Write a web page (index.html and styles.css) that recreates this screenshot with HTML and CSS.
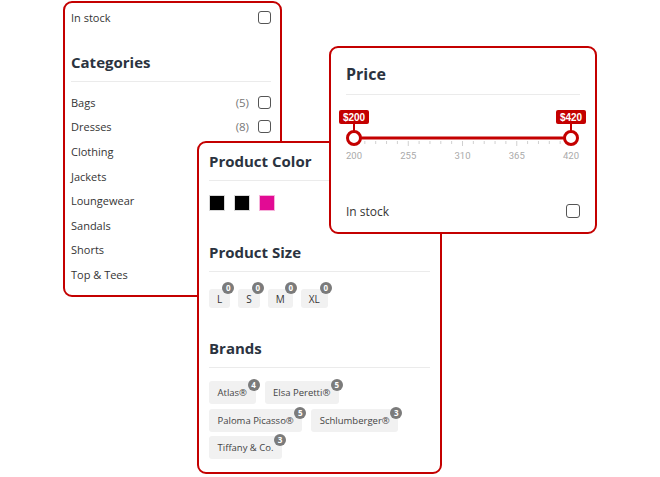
FILE: index.html
```html
<!DOCTYPE html>
<html>
<head>
<meta charset="utf-8">
<link rel="stylesheet" href="styles.css">
</head>
<body>
<div class="canvas">
  <section class="card card-cat">
    <div class="row stock-row"><span>In stock</span><span class="box"></span></div>
    <h2 class="title">Categories</h2>
    <div class="rule"></div>
    <ul class="cats">
      <li><span class="name">Bags</span><span class="count">(5)</span><span class="box"></span></li>
      <li><span class="name">Dresses</span><span class="count">(8)</span><span class="box"></span></li>
      <li><span class="name">Clothing</span></li>
      <li><span class="name">Jackets</span></li>
      <li><span class="name">Loungewear</span></li>
      <li><span class="name">Sandals</span></li>
      <li><span class="name">Shorts</span></li>
      <li><span class="name">Top &amp; Tees</span></li>
    </ul>
  </section>

  <section class="card card-prod">
    <h2 class="title">Product Color</h2>
    <div class="rule"></div>
    <div class="swatches">
      <span class="sw black"></span><span class="sw black"></span><span class="sw pink"></span>
    </div>
    <h2 class="title t-size">Product Size</h2>
    <div class="rule"></div>
    <div class="sizes">
      <span class="size">L<b class="badge">0</b></span>
      <span class="size">S<b class="badge">0</b></span>
      <span class="size">M<b class="badge">0</b></span>
      <span class="size">XL<b class="badge">0</b></span>
    </div>
    <h2 class="title t-brands">Brands</h2>
    <div class="rule"></div>
    <div class="brands">
      <span class="brand">Atlas®<b class="badge">4</b></span>
      <span class="brand">Elsa Peretti®<b class="badge">5</b></span>
      <span class="brand">Paloma Picasso®<b class="badge">5</b></span>
      <span class="brand">Schlumberger®<b class="badge">3</b></span>
      <span class="brand">Tiffany &amp; Co.<b class="badge">3</b></span>
    </div>
  </section>

  <section class="card card-price">
    <h2 class="title">Price</h2>
    <div class="rule"></div>
    <svg class="slider" width="254" height="66" viewBox="0 0 254 66">
      <g stroke="#d0d0d0" stroke-width="1">
        <line x1="28.85" y1="41" x2="28.85" y2="44"/><line x1="39.7" y1="41" x2="39.7" y2="44"/><line x1="50.55" y1="41" x2="50.55" y2="44"/><line x1="61.4" y1="41" x2="61.4" y2="44"/>
        <line x1="72.25" y1="41" x2="72.25" y2="46"/>
        <line x1="83.1" y1="41" x2="83.1" y2="44"/><line x1="93.95" y1="41" x2="93.95" y2="44"/><line x1="104.8" y1="41" x2="104.8" y2="44"/><line x1="115.65" y1="41" x2="115.65" y2="44"/>
        <line x1="126.5" y1="41" x2="126.5" y2="46"/>
        <line x1="137.35" y1="41" x2="137.35" y2="44"/><line x1="148.2" y1="41" x2="148.2" y2="44"/><line x1="159.05" y1="41" x2="159.05" y2="44"/><line x1="169.9" y1="41" x2="169.9" y2="44"/>
        <line x1="180.75" y1="41" x2="180.75" y2="46"/>
        <line x1="191.6" y1="41" x2="191.6" y2="44"/><line x1="202.45" y1="41" x2="202.45" y2="44"/><line x1="213.3" y1="41" x2="213.3" y2="44"/><line x1="224.15" y1="41" x2="224.15" y2="44"/>
      </g>
      <line x1="18" y1="38" x2="235" y2="38" stroke="#c40000" stroke-width="3"/>
      <rect x="3" y="10" width="30" height="14" rx="2" fill="#c40000"/>
      <line x1="18" y1="24" x2="18" y2="31" stroke="#c40000" stroke-width="2"/>
      <text x="18" y="21" class="tip">$200</text>
      <rect x="220" y="10" width="30" height="14" rx="2" fill="#c40000"/>
      <line x1="235" y1="24" x2="235" y2="31" stroke="#c40000" stroke-width="2"/>
      <text x="235" y="21" class="tip">$420</text>
      <circle cx="18" cy="38" r="6.5" fill="#fff" stroke="#c40000" stroke-width="3"/>
      <circle cx="235" cy="38" r="6.5" fill="#fff" stroke="#c40000" stroke-width="3"/>
      <text x="18" y="58.5" class="lbl">200</text>
      <text x="72.25" y="58.5" class="lbl">255</text>
      <text x="126.5" y="58.5" class="lbl">310</text>
      <text x="180.75" y="58.5" class="lbl">365</text>
      <text x="235" y="58.5" class="lbl">420</text>
    </svg>
    <div class="row price-stock"><span>In stock</span><span class="box big"></span></div>
  </section>
</div>
</body>
</html>
```
FILE: styles.css
```css
* { box-sizing: border-box; }
html, body { margin: 0; padding: 0; background: #fff; }
body {
  font-family: "Open Sans", "Noto Sans", sans-serif;
  color: #353535;
  width: 660px;
  height: 477px;
  overflow: hidden;
}
.canvas { position: relative; width: 660px; height: 477px; }

.card {
  position: absolute;
  background: #fff;
  border: 2px solid #c40000;
  border-radius: 9px;
  display: flex;
  flex-direction: column;
}
.card-cat { left: 63px; top: 1px; width: 219px; height: 296px; padding: 0 9px 0 6px; }
.card-prod { left: 197px; top: 141px; width: 245px; height: 333px; padding: 7px 10px 0 10px; }
.card-price { left: 329px; top: 46px; width: 268px; height: 188px; padding: 15px 15px 0 15px; }

.title {
  margin: 0;
  height: 22px;
  line-height: 22px;
  font-size: 15px;
  font-weight: 700;
  color: #2b3340;
}
.card-price .title { font-size: 16px; }
.rule { height: 1px; background: #ebebeb; margin-top: 8px; }
.card-price .rule { margin-top: 9px; }

.row { display: flex; align-items: center; justify-content: space-between; font-size: 11px; }
.stock-row { height: 28px; margin-bottom: 20px; }
.box {
  width: 13px; height: 13px;
  border: 1.5px solid #555;
  border-radius: 3px;
  flex: none;
}
.box.big { width: 14px; height: 14px; }

.cats { list-style: none; margin: 8px 0 0; padding: 0; }
.cats li {
  height: 24.6px;
  display: flex;
  align-items: center;
  font-size: 11px;
}
.cats .name { flex: 1; }
.cats .count { color: #777; margin-right: 9px; font-size: 11.5px; }

.swatches { display: flex; gap: 9px; margin-top: 14px; }
.sw { width: 16px; height: 16px; border: 1px solid #d8d8d8; }
.sw.black { background: #000; }
.sw.pink { background: #e20b94; border-color: #f6b3da; }

.t-size { margin-top: 30px; }
.t-brands { margin-top: 29px; }

.sizes { display: flex; gap: 8px; margin-top: 17px; }
.size {
  position: relative;
  height: 19px;
  padding: 0 8px 2px;
  min-width: 20px;
  background: #f1f1f1;
  border-radius: 3px;
  font-size: 10px;
  display: flex;
  align-items: flex-end;
  justify-content: center;
}
.badge {
  position: absolute;
  width: 12px; height: 12px;
  border-radius: 50%;
  background: #7b7b7b;
  color: #fff;
  font-size: 8px;
  font-weight: 700;
  line-height: 12px;
  text-align: center;
}
.size .badge { right: -4px; top: -7px; }

.brands { display: flex; flex-wrap: wrap; gap: 4.5px 9px; margin-top: 13px; width: 205px; }
.brand {
  position: relative;
  height: 23px;
  padding: 0 8.5px;
  background: #f1f1f1;
  border-radius: 3px;
  font-size: 9.5px;
  color: #444;
  display: flex;
  align-items: center;
}
.brand .badge { right: -4px; top: -2px; }

.slider { display: block; margin: 5px 0 0 -10px; }
.tip { fill: #fff; font-family: "Liberation Sans", Arial, sans-serif; font-size: 10px; font-weight: 700; text-anchor: middle; }
.lbl { fill: #aaa; font-family: Roboto, "Liberation Sans", sans-serif; font-size: 9.5px; text-anchor: middle; }
.price-stock { margin-top: 37px; height: 16px; font-size: 12px; }
```
